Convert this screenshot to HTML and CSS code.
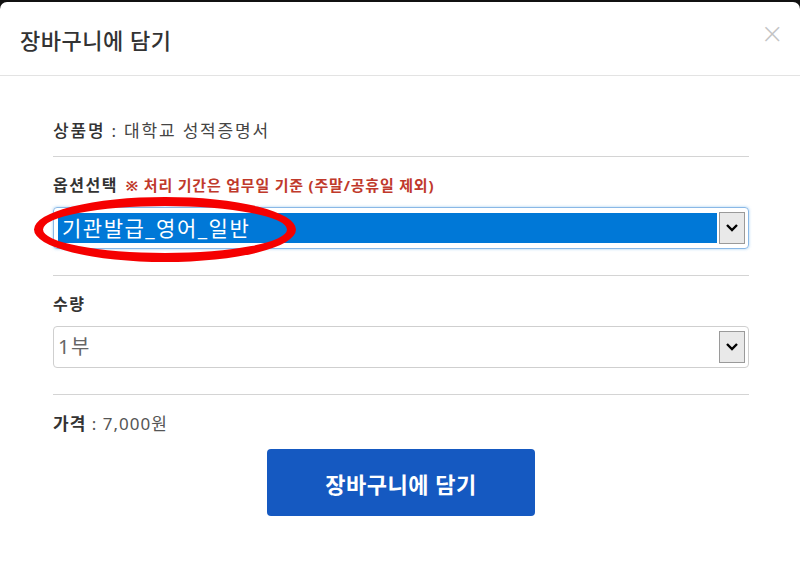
FILE: index.html
```html
<!DOCTYPE html>
<html lang="ko">
<head>
    <meta charset="UTF-8">
    <title>장바구니에 담기</title>
    <link rel="stylesheet" href="styles.css">
</head>
<body>
    <div class="modal">
        <div class="modal-header">
            <h4 class="modal-title">장바구니에 담기</h4>
            <span class="close">&times;</span>
        </div>
        <div class="modal-body">
            <p class="row product"><b>상품명</b> : 대학교 성적증명서</p>
            <hr>
            <p class="row label"><b>옵션선택</b> <span class="note">※ 처리 기간은 업무일 기준 (주말/공휴일 제외)</span></p>
            <div class="select focused">
                <div class="value selected">기관발급_영어_일반</div>
                <div class="arrow">
                    <svg width="14" height="10" viewBox="0 0 14 10"><polyline points="2,2 7,7 12,2" fill="none" stroke="#000" stroke-width="2.4"/></svg>
                </div>
                <div class="mark"></div>
            </div>
            <hr>
            <p class="row label"><b>수량</b></p>
            <div class="select">
                <div class="value">1부</div>
                <div class="arrow">
                    <svg width="14" height="10" viewBox="0 0 14 10"><polyline points="2,2 7,7 12,2" fill="none" stroke="#000" stroke-width="2.4"/></svg>
                </div>
            </div>
            <hr>
            <p class="row price"><b>가격</b> : 7,000원</p>
            <div class="actions">
                <button class="btn-cart">장바구니에 담기</button>
            </div>
        </div>
    </div>
</body>
</html>
```

FILE: styles.css
```css
html, body {
    height: 100%;
}
body {
    margin: 0;
    background-color: #111;
    font-family: 'Noto Sans', 'Noto Sans CJK KR', sans-serif;
    color: #333;
    overflow: hidden;
}
.modal {
    margin-top: 2px;
    height: 100%;
    background-color: white;
    border-radius: 7px 7px 0 0;
}
.modal-header {
    height: 73px;
    border-bottom: 1px solid #e3e3e3;
    display: flex;
    align-items: center;
    justify-content: space-between;
    padding: 0 16px 0 20px;
}
.modal-title {
    margin: 0;
    font-size: 22px;
    font-weight: 500;
    color: #333;
    letter-spacing: 0.5px;
}
.close {
    font-family: 'DejaVu Sans', sans-serif;
    font-size: 28px;
    font-weight: 300;
    color: #c4c4c4;
    margin-top: -10px;
}
.modal-body {
    padding: 0 51px 0 53px;
}
.row {
    margin: 0;
    height: 22px;
    line-height: 22px;
    font-size: 16px;
    color: #555;
    letter-spacing: 1.5px;
}
.row b {
    color: #333;
    font-weight: 700;
}
.product {
    font-size: 17px;
    letter-spacing: 1.8px;
    color: #444;
    margin-top: 44px;
    margin-bottom: 14px;
}
.product b {
    font-weight: 500;
}
hr {
    margin: 0;
    border: none;
    border-top: 1px solid #d4d4d4;
}
.label {
    margin-top: 17px;
    margin-bottom: 11px;
}
.note {
    color: #c0392b;
    font-weight: 700;
    font-size: 15px;
    letter-spacing: 0.8px;
    margin-left: 2px;
}
.select {
    position: relative;
    height: 40px;
    border: 1px solid #cfcfcf;
    border-radius: 4px;
    display: flex;
    align-items: center;
    padding: 0 3px 0 4px;
    margin-bottom: 26px;
}
.select.focused {
    border-color: #8ab8e6;
    box-shadow: 0 0 3px rgba(102, 175, 233, 0.6);
}
.value {
    flex: 1;
    height: 30px;
    line-height: 30px;
    font-size: 20px;
    letter-spacing: 1.5px;
    color: #666;
}
.value.selected {
    background-color: #0078d7;
    color: white;
    font-size: 21px;
    margin-right: 2px;
    padding-left: 4px;
}
.arrow {
    width: 26px;
    height: 32px;
    box-sizing: border-box;
    background-color: #e9e9e9;
    border: 1px solid #9a9a9a;
    display: flex;
    align-items: center;
    justify-content: center;
}
.mark {
    position: absolute;
    left: -20px;
    top: -11px;
    width: 244px;
    height: 47px;
    border: 9px solid #f50000;
    border-radius: 50%;
}
.price {
    font-size: 17px;
    letter-spacing: 1px;
    margin-top: 18px;
}
.actions {
    display: flex;
    justify-content: center;
    margin-top: 14px;
}
.btn-cart {
    width: 268px;
    height: 67px;
    border: none;
    border-radius: 4px;
    background-color: #1559c1;
    color: white;
    font-family: inherit;
    font-size: 22px;
    font-weight: 700;
    letter-spacing: 0.5px;
}
```
